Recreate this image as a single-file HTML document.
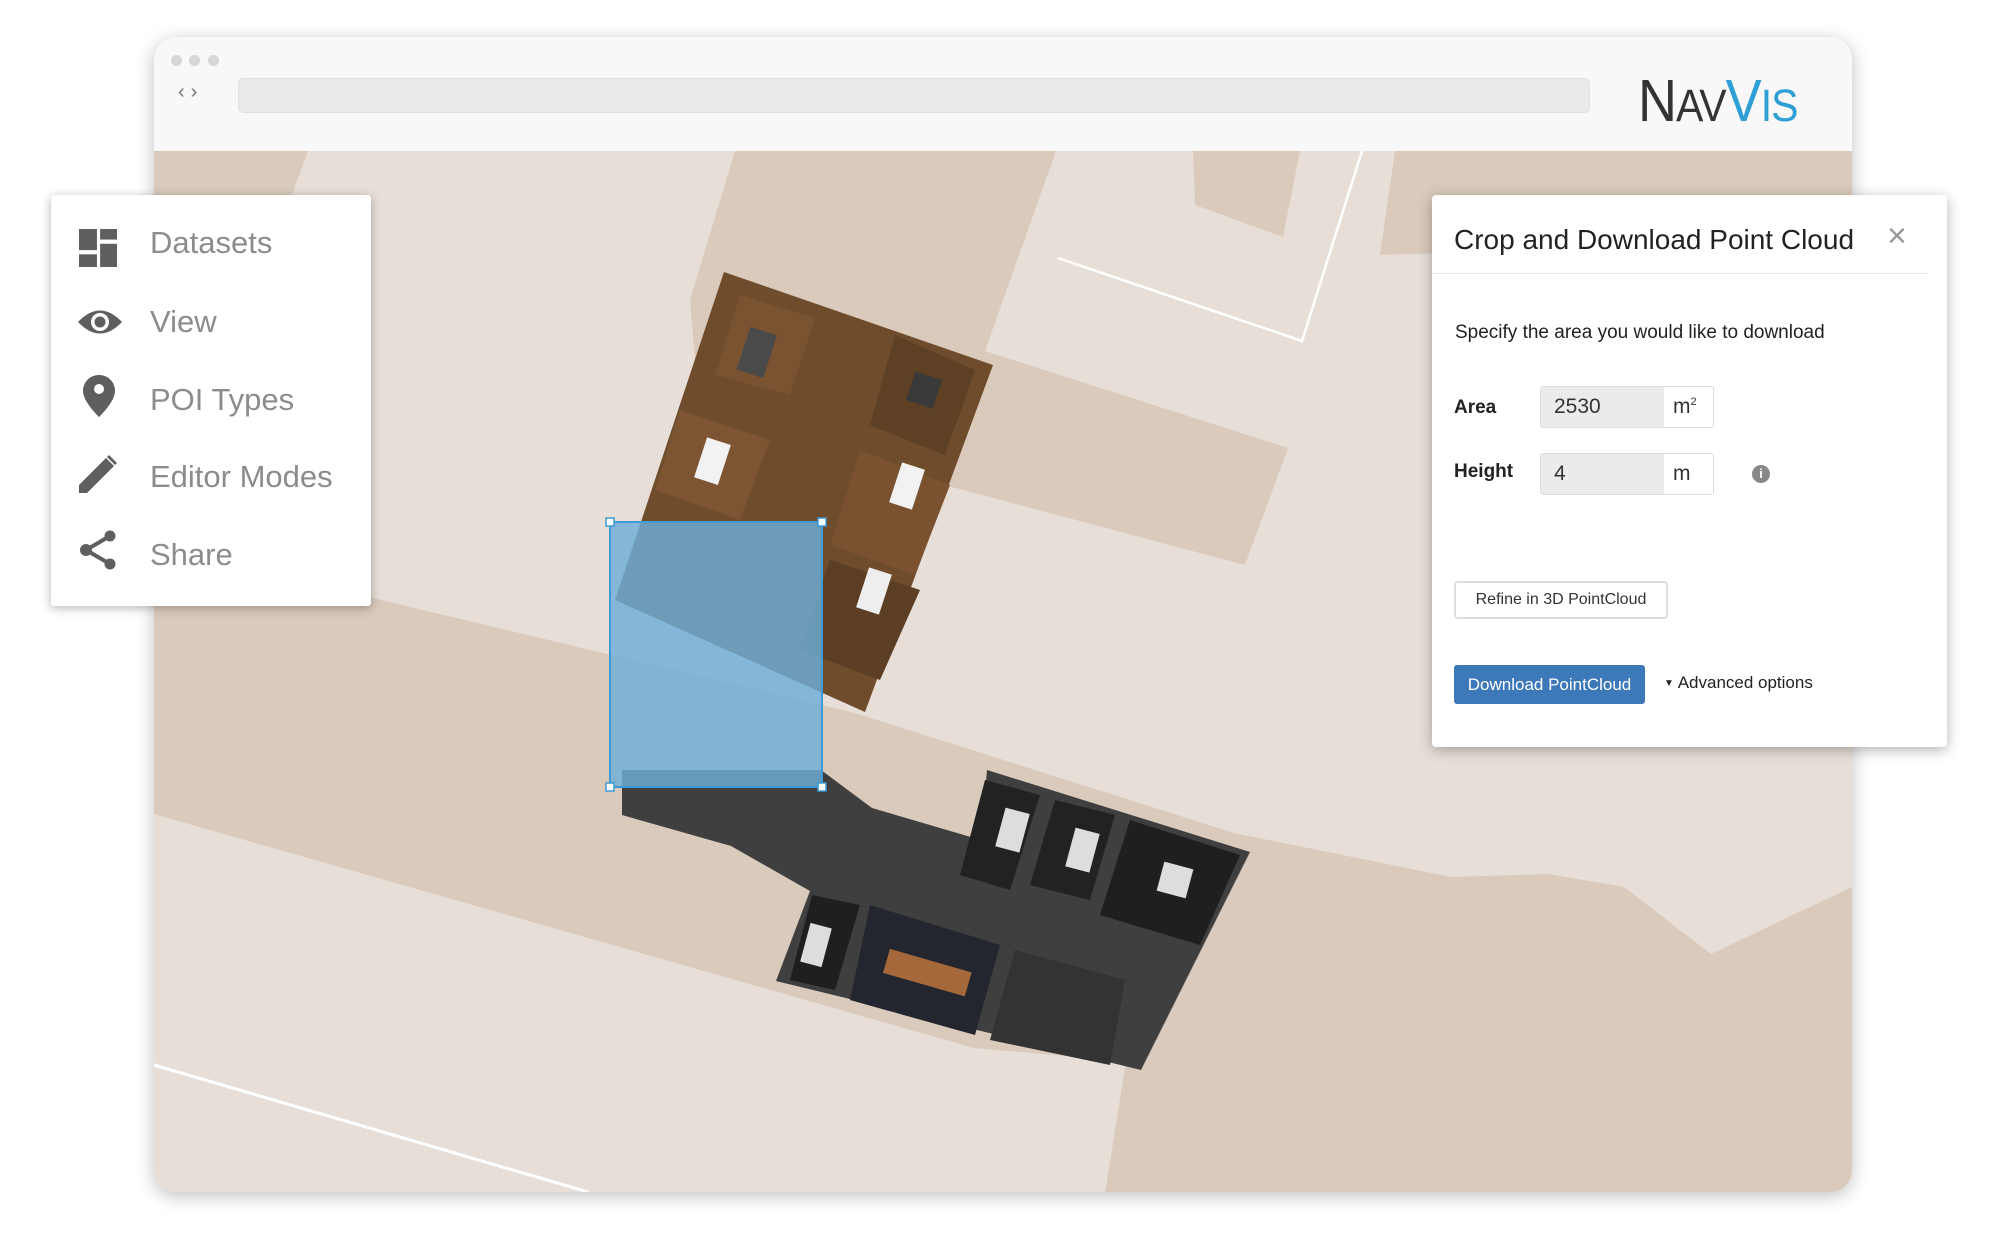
<!DOCTYPE html>
<html><head><meta charset="utf-8"><style>
*{margin:0;padding:0;box-sizing:border-box}
body{width:2000px;height:1239px;background:#fff;position:relative;overflow:hidden;font-family:"Liberation Sans",sans-serif}
.abs{position:absolute}
#win{left:154px;top:37px;width:1698px;height:1155px;border-radius:22px;background:#f8f8f8;box-shadow:0 4px 18px rgba(0,0,0,.25);overflow:hidden}
.dot{width:11px;height:11px;border-radius:50%;background:#d6d6d6;top:18px}
#menu{left:51px;top:195px;width:320px;height:411px;background:#fff;box-shadow:0 2px 10px rgba(0,0,0,.3);border-radius:3px}
.mi{left:99px;font-size:31px;color:#8c8c8c;height:40px;line-height:40px}
#panel{left:1432px;top:195px;width:515px;height:552px;background:#fff;box-shadow:0 3px 14px rgba(0,0,0,.3);border-radius:4px}
.t{color:#222}
</style></head><body>
<div id="win" class="abs">
  <div class="abs dot" style="left:17px"></div><div class="abs dot" style="left:35px"></div><div class="abs dot" style="left:54px"></div>
  <div class="abs" style="left:24px;top:44px;font-size:20px;color:#777;letter-spacing:6px">‹›</div>
  <div class="abs" style="left:84px;top:41px;width:1352px;height:35px;background:#e9eaeb;border-radius:6px;border:1px solid #e0e0e0"></div>
  <div class="abs" style="left:1484px;top:30px;height:50px;white-space:nowrap;transform:scaleY(1.1);transform-origin:0 0;letter-spacing:-1px">
    <span style="font-size:54px;color:#333">N</span><span style="font-size:41px;color:#333">AV</span><span style="font-size:54px;color:#2e9fd4">V</span><span style="font-size:41px;color:#2e9fd4">IS</span>
  </div>
  <svg class="abs" style="left:0;top:114px" width="1698" height="1041" viewBox="154 151 1698 1041">
    <rect x="154" y="151" width="1698" height="1041" fill="#e7dfd7"/>
    <g fill="#d9cabb">
      <polygon points="154,151 308,151 290,200 154,200"/>
      <polygon points="735,151 1056,151 985,351 1288,448 1245,565 700,420 690,300"/>
      <polygon points="1193,151 1300,151 1283,237 1195,205"/>
      <polygon points="1395,151 1852,151 1852,240 1380,255"/>
      <polygon points="150,545 855,713 1234,833 1451,877 1548,874 1624,887 1711,954 1852,887 1852,1200 1104,1200 1126,1061 974,1048 150,813"/>
    </g>
    <polyline points="1058,258 1302,341 1362,151" fill="none" stroke="#fff" stroke-width="2.5"/>
    <line x1="154" y1="1065" x2="588" y2="1192" stroke="#fff" stroke-width="3"/>
    <polygon points="724,272 993,365 865,712 615,600" fill="#6e4c2c"/>
    <polygon points="740,295 815,318 790,395 715,375" fill="#7a5330"/>
    <polygon points="895,335 975,370 945,455 870,425" fill="#5e4024"/>
    <polygon points="680,410 770,440 740,520 655,490" fill="#7d5533"/>
    <polygon points="860,450 950,485 915,575 830,545" fill="#7a5230"/>
    <polygon points="830,560 920,590 880,680 800,650" fill="#5b3e24"/>
    <rect x="743" y="330" width="28" height="45" fill="#4a4a4a" transform="rotate(18 757 352)"/>
    <rect x="700" y="440" width="25" height="42" fill="#f2f2f2" transform="rotate(18 712 461)"/>
    <rect x="895" y="465" width="24" height="42" fill="#f2f2f2" transform="rotate(18 907 486)"/>
    <rect x="862" y="570" width="24" height="42" fill="#eee" transform="rotate(18 874 591)"/>
    <rect x="910" y="375" width="28" height="30" fill="#3a3a3a" transform="rotate(18 924 390)"/>
    <polygon points="622,770 821,770 872,808 981,840 987,770 1250,852 1141,1070 776,981 810,891 731,846 622,815" fill="#3f3f3f"/>
    <polygon points="985,780 1040,795 1010,890 960,875" fill="#222"/>
    <polygon points="1055,800 1115,815 1090,900 1030,885" fill="#222"/>
    <polygon points="1130,820 1240,855 1200,945 1100,915" fill="#1f1f1f"/>
    <polygon points="812,895 860,905 835,990 790,980" fill="#1f1f1f"/>
    <polygon points="870,905 1000,945 975,1035 850,1000" fill="#23262e"/>
    <polygon points="1015,950 1125,980 1110,1065 990,1040" fill="#333"/>
    <rect x="885" y="960" width="85" height="25" fill="#a5683a" transform="rotate(16 927 972)"/>
    <rect x="1000" y="810" width="25" height="40" fill="#ddd" transform="rotate(15 1012 830)"/>
    <rect x="1070" y="830" width="25" height="40" fill="#ddd" transform="rotate(15 1082 850)"/>
    <rect x="1160" y="865" width="30" height="30" fill="#ddd" transform="rotate(15 1175 880)"/>
    <rect x="805" y="925" width="22" height="40" fill="#ddd" transform="rotate(15 816 945)"/>
    <rect x="610" y="522" width="212" height="265" fill="rgba(110,175,215,0.82)" stroke="#3d9ad6" stroke-width="2"/>
    <g fill="#fff" stroke="#3d9ad6" stroke-width="1.5">
      <rect x="606" y="518" width="8" height="8"/><rect x="818" y="518" width="8" height="8"/>
      <rect x="606" y="783" width="8" height="8"/><rect x="818" y="783" width="8" height="8"/>
    </g>
  </svg>
</div>

<div id="menu" class="abs">
  <svg class="abs" style="left:28px;top:34px" width="38" height="38" viewBox="0 0 36 36"><g fill="#5f5f5f"><rect x="0" y="0" width="17" height="20"/><rect x="20" y="0" width="16" height="10"/><rect x="0" y="24" width="17" height="12"/><rect x="20" y="14" width="16" height="22"/></g></svg>
  <div class="abs mi" style="top:28px">Datasets</div>
  <svg class="abs" style="left:26px;top:112px" width="46" height="30" viewBox="0 0 46 30"><path d="M1 15 Q23 -8 45 15 Q23 38 1 15Z" fill="#5f5f5f"/><circle cx="23" cy="15" r="9" fill="#fff"/><circle cx="23" cy="15" r="5.5" fill="#5f5f5f"/></svg>
  <div class="abs mi" style="top:107px">View</div>
  <svg class="abs" style="left:32px;top:180px" width="32" height="42" viewBox="0 0 32 42"><path d="M16 0C7 0 0 7 0 16 0 27 16 42 16 42S32 27 32 16C32 7 25 0 16 0Z" fill="#5f5f5f"/><circle cx="16" cy="14" r="5" fill="#fff"/></svg>
  <div class="abs mi" style="top:185px">POI Types</div>
  <svg class="abs" style="left:28px;top:260px" width="40" height="38" viewBox="0 0 40 38"><path d="M0 38 L0 30 L27 3 L35 11 L8 38Z M30 0 L38 8 L36 10 L28 2Z" fill="#5f5f5f"/></svg>
  <div class="abs mi" style="top:262px">Editor Modes</div>
  <svg class="abs" style="left:28px;top:335px" width="40" height="40" viewBox="0 0 40 40"><g fill="#5f5f5f"><circle cx="31" cy="6" r="5.5"/><circle cx="7" cy="20" r="6"/><circle cx="31" cy="34" r="5.5"/></g><path d="M31 6 L7 20 L31 34" stroke="#5f5f5f" stroke-width="4" fill="none"/></svg>
  <div class="abs mi" style="top:340px">Share</div>
</div>

<div id="panel" class="abs">
  <div class="abs t" style="left:22px;top:29px;font-size:28px">Crop and Download Point Cloud</div>
  <div class="abs" style="left:455px;top:22px;font-size:34px;color:#999;font-weight:300">×</div>
  <div class="abs" style="left:0;top:78px;width:495px;height:1px;background:#e6e6e6"></div>
  <div class="abs t" style="left:23px;top:127px;font-size:19px">Specify the area you would like to download</div>
  <div class="abs t" style="left:22px;top:202px;font-size:19px;font-weight:bold">Area</div>
  <div class="abs" style="left:108px;top:191px;width:174px;height:42px;border:1px solid #ddd;border-radius:3px;overflow:hidden;background:#fff">
    <div class="abs" style="left:0;top:0;width:123px;height:40px;background:#ebebeb"></div>
    <div class="abs t" style="left:13px;top:8px;font-size:21px;color:#333">2530</div>
    <div class="abs t" style="left:132px;top:8px;font-size:21px;color:#333">m<sup style="font-size:11px">2</sup></div>
  </div>
  <div class="abs t" style="left:22px;top:266px;font-size:19px;font-weight:bold">Height</div>
  <div class="abs" style="left:108px;top:258px;width:174px;height:42px;border:1px solid #ddd;border-radius:3px;overflow:hidden;background:#fff">
    <div class="abs" style="left:0;top:0;width:123px;height:40px;background:#ebebeb"></div>
    <div class="abs t" style="left:13px;top:8px;font-size:21px;color:#333">4</div>
    <div class="abs t" style="left:132px;top:8px;font-size:21px;color:#333">m</div>
  </div>
  <div class="abs" style="left:320px;top:270px;width:18px;height:18px;border-radius:50%;background:#888;color:#fff;font-size:13px;font-weight:bold;text-align:center;line-height:18px">i</div>
  <div class="abs" style="left:22px;top:386px;width:214px;height:38px;border:2px solid #ddd;border-radius:4px;font-size:16px;color:#333;text-align:center;line-height:34px">Refine in 3D PointCloud</div>
  <div class="abs" style="left:22px;top:470px;width:191px;height:39px;background:#3d78b9;border-radius:3px;font-size:17px;color:#fff;text-align:center;line-height:39px">Download PointCloud</div>
  <div class="abs t" style="left:232px;top:478px;font-size:17px"><span style="font-size:10px;vertical-align:2px">▼</span> Advanced options</div>
</div>
</body></html>
